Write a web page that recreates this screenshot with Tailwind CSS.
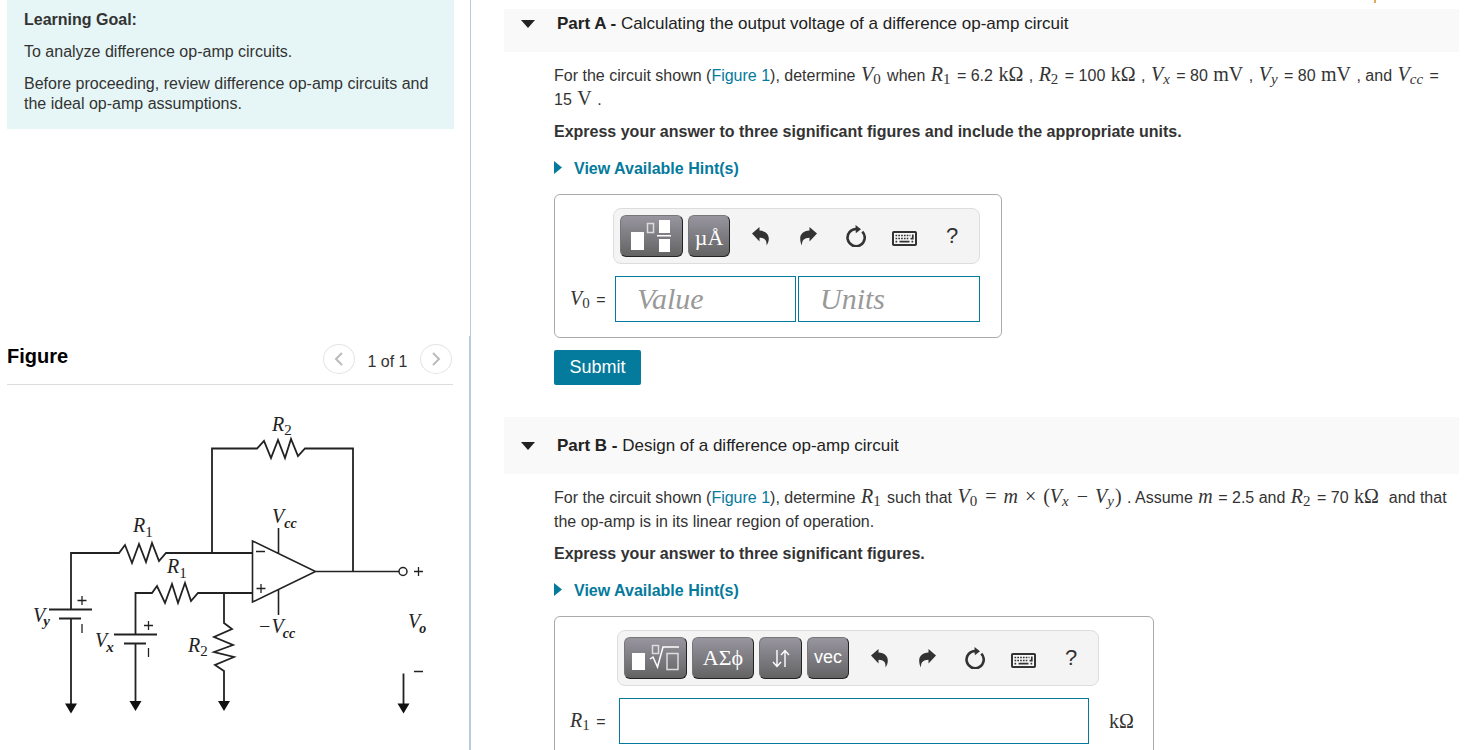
<!DOCTYPE html>
<html lang="en">
<head>
    <meta charset="UTF-8">
    <meta name="viewport" content="width=device-width, initial-scale=1.0">
    <title>Difference Op-Amp Circuits</title>
    <script src="https://cdn.jsdelivr.net/npm/@tailwindcss/browser@4"></script>
    <style>
        body {
            font-family: 'Liberation Sans', Arial, sans-serif;
        }
        /* Math symbols inside running text */
        .math, .math-input {
            font-family: 'Liberation Serif', 'Times New Roman', serif;
        }
        .math {
            font-size: 20px;
            line-height: 20px;
            white-space: nowrap;
            padding: 0 1px;
        }
        .math sub {
            font-size: 15px;
            line-height: 0;
            bottom: -3px;
            margin-right: 1px;
        }
        /* Dark template buttons of the equation toolbar */
        .tool {
            height: 42px;
            border: 1px solid #222;
            border-top-color: #777;
            border-left-color: #777;
            border-radius: 6px;
            background: linear-gradient(#98959f, #636363);
            color: #fff;
            display: flex;
            align-items: center;
            justify-content: center;
        }
    </style>
</head>
<body class="bg-white text-[#333] text-base leading-5">

    <!-- Shared icons -->
    <svg class="hidden">
        <symbol id="undo" viewBox="0 0 17 19"><path fill="#333" d="M0 6.5 7.5 0v3.6c6 .3 9.5 3.4 9.3 8.4-.1 2.6-1 4.6-2.3 6.5.5-5-1.5-7.6-7-7.7v3.7z"/></symbol>
        <symbol id="redo" viewBox="0 0 17 19"><path fill="#333" d="M17 6.5 9.5 0v3.6C3.5 3.9 0 7 .2 12c.1 2.6.6 4.6 1.8 6.5-.3-5 2-7.6 7.5-7.7v3.7z"/></symbol>
        <symbol id="reset" viewBox="0 0 20 22"><path fill="none" stroke="#333" stroke-width="2.6" d="M10.5 4A8.6 8.6 0 1 0 16.3 6.6"/><path fill="#333" d="M9.5 0 15 4.2 9.800 8.200z"/></symbol>
        <symbol id="keyboard" viewBox="0 0 25 15">
            <rect x="1" y="1" width="23" height="13" rx=".8" fill="#f8f8f8" stroke="#333" stroke-width="2"/>
            <path stroke="#333" stroke-width="1.7" stroke-dasharray="1.7 1.1" d="M3.5 4.5h15M3.5 7.5h14M3.5 10.7h2M19.5 10.7h2"/>
            <path fill="none" stroke="#333" stroke-width="1.7" d="M7.5 10.7h10M20.8 3.6v4h-2.300"/>
        </symbol>
    </svg>

    <div class="flex h-screen overflow-hidden">

        <!-- Left column -->
        <aside class="w-[471px] shrink-0 flex flex-col">
            <div class="h-[336px] border-r border-[#b8cbdc] pl-[7px] pr-4">
                <section class="bg-[#e6f6f6] pl-[17px] pr-4 pt-[10px] pb-[15px]">
                    <h2 class="font-bold">Learning Goal:</h2>
                    <p class="mt-3">To analyze difference op-amp circuits.</p>
                    <p class="mt-3">Before proceeding, review difference op-amp circuits and the ideal op-amp assumptions.</p>
                </section>
            </div>
            <div class="flex-1 border-r-2 border-[#b8cbdc] pl-[7px] pr-4">
                <div class="h-[49px] flex items-center border-b border-[#ddd] pr-px">
                    <h2 class="flex-1 text-xl font-bold text-black pb-2">Figure</h2>
                    <button aria-label="Previous figure" class="w-8 h-[30px] mb-0.5 rounded-[50%] border border-[#e4e4e4] flex items-center justify-center">
                        <svg width="10" height="14" viewBox="0 0 10 14"><path fill="none" stroke="#bbb" stroke-width="2" d="M8 1 2 7l6 6"/></svg>
                    </button>
                    <span class="w-[65px] text-center pt-1">1 of 1</span>
                    <button aria-label="Next figure" class="w-8 h-[30px] mb-0.5 rounded-[50%] border border-[#e4e4e4] flex items-center justify-center">
                        <svg width="10" height="14" viewBox="0 0 10 14"><path fill="none" stroke="#bbb" stroke-width="2" d="m2 1 6 6-6 6"/></svg>
                    </button>
                </div>

                <!-- Circuit diagram -->
                <svg class="w-full" viewBox="7 385 446 345" fill="none" stroke="#222" stroke-width="1.8" font-family="Liberation Serif, serif">
                    <path d="M71 609V553h48l6-8 7 18 7-19 7 18 6-19 7 18 7-8h86"/>
                    <path d="M212 553V448.5h45l7-7.5 7 17 7-18 7 18 6-19 7 17 7-7.500h48V571.5"/>
                    <path d="M135.5 634V593h16.5l5-7 8 17 7-19 6 19 7-20 6 18 7-8h54"/>
                    <path d="M224 593v30l8 6-18 8 19 8-19 7 20 5-19 8 9 6v32"/>
                    <path d="M71 618.5V704M135.5 643.5V702M403.5 673.5V704"/>
                    <path d="M49 609.5h43M59 618.5h22M114 634.5h43M124 643.5h22"/>
                    <path stroke-width="1.6" d="M252.5 541v61l63-30.5zM278.5 528v25M278.5 590v25M315 571.5h84"/>
                    <circle cx="403" cy="571.5" r="4" stroke-width="1.5"/>
                    <path stroke-width="1.3" d="M77.5 600.5h9M82 596v9M82 624v9M144 625.5h9M148.5 621v9M148.5 648v9M256 551.5h9M256.5 588.5h9M261 584v9M414 571.5h9M418.5 567v9M414 671.5h9"/>
                    <path fill="#111" stroke="none" d="M65 703.5h12l-6 10zM129.5 701h12l-6 10zM218 701h12l-6 10zM397.5 703.5h12l-6 10z"/>
                    <g fill="#222" stroke="none" font-size="20" font-style="italic">
                        <text x="133" y="532">R<tspan dy="5" font-size="15" font-style="normal">1</tspan></text>
                        <text x="272" y="431">R<tspan dy="4" font-size="15" font-style="normal">2</tspan></text>
                        <text x="167" y="573">R<tspan dy="5" font-size="15" font-style="normal">1</tspan></text>
                        <text x="188" y="652">R<tspan dy="4" font-size="15" font-style="normal">2</tspan></text>
                        <text x="33" y="622">V<tspan dx="-2" dy="4" font-size="15" font-weight="bold">y</tspan></text>
                        <text x="95" y="647">V<tspan dx="-1" dy="5" font-size="15" font-weight="bold">x</tspan></text>
                        <text x="272" y="523">V<tspan dy="5" font-size="14" font-weight="bold">cc</tspan></text>
                        <text x="258" y="633">−V<tspan dx="-1" dy="5" font-size="14" font-weight="bold">cc</tspan></text>
                        <text x="408" y="628">V<tspan dx="-1" dy="5" font-size="14" font-weight="bold">o</tspan></text>
                    </g>
                </svg>
            </div>
        </aside>

        <!-- Right column -->
        <main class="flex-1 min-w-0 pl-[33px] pr-[7px]">
            <div class="h-[9px] flex justify-end pr-[83px]"><span class="w-0.5 h-[3px] bg-[#e0a95c]"></span></div>

            <!-- Part A -->
            <section>
                <header class="h-[43px] bg-[#f9f9f9] flex items-start gap-[22px] pl-[17px] pt-[5px] text-[17px] text-[#222]">
                    <button aria-label="Collapse Part A" class="h-5 flex items-center"><svg width="14" height="8" viewBox="0 0 14 8"><path fill="#222" d="M0 0h14L7 8z"/></svg></button>
                    <h2><b>Part A - </b>Calculating the output voltage of a difference op-amp circuit</h2>
                </header>
                <div class="pl-[50px]">
                    <p class="mt-3 leading-6 -mr-2">For the circuit shown (<a href="#" class="text-[#047a9c]">Figure 1</a>), determine <span class="math"><i>V</i><sub>0</sub></span> when <span class="math"><i>R</i><sub>1</sub></span> = 6.2 <span class="math">kΩ</span> , <span class="math"><i>R</i><sub>2</sub></span> = 100 <span class="math">kΩ</span> , <span class="math"><i>V<sub>x</sub></i></span> = 80 <span class="math">mV</span> , <span class="math"><i>V<sub>y</sub></i></span> = 80 <span class="math">mV</span> , and <span class="math"><i>V<sub>cc</sub></i></span> =<br>15 <span class="math">V</span> .</p>
                    <p class="mt-[10px] font-bold">Express your answer to three significant figures and include the appropriate units.</p>
                    <button class="mt-[17px] flex items-center gap-3 font-bold text-[#047a9c]">
                        <svg class="mb-1" width="8" height="13" viewBox="0 0 8 13"><path fill="#047a9c" d="M0 0l8 6.5L0 13z"/></svg>
                        View Available Hint(s)
                    </button>

                    <div class="mt-[15px] w-fit h-36 border border-[#aaa] rounded-md pt-[13px] pl-[14px] pr-[21px]">
                        <div class="ml-11 h-14 bg-[#f4f4f4] border border-[#ddd] rounded-lg flex items-center gap-[5px] pl-1.5 pr-[3px]">
                            <button aria-label="Templates" class="tool w-[63px]">
                                <svg width="42" height="34" viewBox="0 0 42 34"><path fill="#fff" d="M0 13h13v18H0zM28 1h11v13H28zM28 20h11v13H28zM26 16h14v1.5H26z"/><path fill="none" stroke="#ddd" stroke-width="1.5" d="M16.5 4.5h6v9h-6z"/></svg>
                            </button>
                            <button aria-label="Unit symbols" class="tool w-[42px] math-input text-[22px] pt-1">µÅ</button>
                            <div class="flex ml-px">
                                <button aria-label="Undo" class="w-12 h-10 flex items-center justify-center"><svg width="17" height="19"><use href="#undo"/></svg></button>
                                <button aria-label="Redo" class="w-12 h-10 flex items-center justify-center"><svg width="17" height="19"><use href="#redo"/></svg></button>
                                <button aria-label="Reset" class="w-12 h-10 flex items-center justify-center"><svg width="20" height="22"><use href="#reset"/></svg></button>
                                <button aria-label="Keyboard shortcuts" class="w-12 h-10 flex items-center justify-center pt-1"><svg width="25" height="15"><use href="#keyboard"/></svg></button>
                                <button aria-label="Help" class="w-12 h-10 text-[22px]">?</button>
                            </div>
                        </div>
                        <div class="mt-3 flex items-center gap-0.5">
                            <label for="value" class="w-11"><span class="math"><i>V</i><sub>0</sub></span> =</label>
                            <input id="value" type="text" placeholder="Value" class="math-input w-[181px] h-[46px] border border-[#047a9c] px-[21px] text-[30px] italic placeholder:text-[#999]">
                            <input aria-label="Units" type="text" placeholder="Units" class="math-input w-[182px] h-[46px] border border-[#047a9c] px-[21px] text-[30px] italic placeholder:text-[#999]">
                        </div>
                    </div>

                    <button class="mt-3 h-[35px] w-[87px] pb-0.5 bg-[#047a9c] text-white text-lg leading-5 rounded-xs">Submit</button>
                </div>
            </section>

            <!-- Part B -->
            <section class="mt-8">
                <header class="h-[57px] bg-[#f9f9f9] flex items-center gap-[22px] pl-[17px] text-[17px] text-[#222]">
                    <button aria-label="Collapse Part B" class="h-5 flex items-center"><svg width="14" height="8" viewBox="0 0 14 8"><path fill="#222" d="M0 0h14L7 8z"/></svg></button>
                    <h2><b>Part B - </b>Design of a difference op-amp circuit</h2>
                </header>
                <div class="pl-[50px]">
                    <p class="mt-3 leading-6 -mr-2">For the circuit shown (<a href="#" class="text-[#047a9c]">Figure 1</a>), determine <span class="math"><i>R</i><sub>1</sub></span> such that <span class="math"><i>V</i><sub>0</sub> <span class="px-0.5">=</span> <i>m</i> <span class="px-0.5">×</span> (<i>V<sub>x</sub></i> <span class="px-0.5">−</span> <i>V<sub>y</sub></i>)</span> . Assume <span class="math"><i>m</i></span> = 2.5 and <span class="math"><i>R</i><sub>2</sub></span> = 70 <span class="math">kΩ</span>&nbsp; and that<br>the op-amp is in its linear region of operation.</p>
                    <p class="mt-[10px] font-bold">Express your answer to three significant figures.</p>
                    <button class="mt-[17px] flex items-center gap-3 font-bold text-[#047a9c]">
                        <svg class="mb-1" width="8" height="13" viewBox="0 0 8 13"><path fill="#047a9c" d="M0 0l8 6.5L0 13z"/></svg>
                        View Available Hint(s)
                    </button>

                    <div class="mt-[15px] w-fit h-40 border border-[#aaa] rounded-md pt-[13px] pl-[14px] pr-[18px]">
                        <div class="ml-12 w-fit h-14 bg-[#f4f4f4] border border-[#ddd] rounded-lg flex items-center gap-[5px] pl-1.5 pr-[3px]">
                            <button aria-label="Templates" class="tool w-[63px]">
                                <svg width="49" height="30" viewBox="0 0 49 30"><path fill="#fff" d="M1 10h13v17H1z"/><path fill="none" stroke="#ddd" stroke-width="1.5" d="M21.5 2.5h6v8h-6zM36 10.5h11v16H36z"/><path fill="none" stroke="#fff" stroke-width="1.5" d="m19 16 3-2 4.5 10L32 4h16"/></svg>
                            </button>
                            <button aria-label="Greek symbols" class="tool w-[62px] math-input text-[22px] leading-5">ΑΣϕ</button>
                            <button aria-label="Arrows" class="tool w-[43px]">
                                <svg width="18" height="19" viewBox="0 0 18 19"><path fill="none" stroke="#fff" stroke-width="1.4" d="M5 1v16M1 13l4 4.5L9 13M13 18V2M9 6l4-4.5L17 6"/></svg>
                            </button>
                            <button class="tool w-[42px] pb-0.5 text-lg leading-5">vec</button>
                            <div class="flex ml-px">
                                <button aria-label="Undo" class="w-12 h-10 flex items-center justify-center"><svg width="17" height="19"><use href="#undo"/></svg></button>
                                <button aria-label="Redo" class="w-12 h-10 flex items-center justify-center"><svg width="17" height="19"><use href="#redo"/></svg></button>
                                <button aria-label="Reset" class="w-12 h-10 flex items-center justify-center"><svg width="20" height="22"><use href="#reset"/></svg></button>
                                <button aria-label="Keyboard shortcuts" class="w-12 h-10 flex items-center justify-center pt-1"><svg width="25" height="15"><use href="#keyboard"/></svg></button>
                                <button aria-label="Help" class="w-12 h-10 text-[22px]">?</button>
                            </div>
                        </div>
                        <div class="mt-3 flex items-center gap-0.5">
                            <label for="resistance" class="w-12"><span class="math"><i>R</i><sub>1</sub></span> =</label>
                            <input id="resistance" type="text" class="math-input w-[470px] h-[46px] border border-[#047a9c] px-[21px] text-[30px]">
                            <span class="math ml-[17px]">kΩ</span>
                        </div>
                    </div>
                </div>
            </section>
        </main>
    </div>
</body>
</html>
